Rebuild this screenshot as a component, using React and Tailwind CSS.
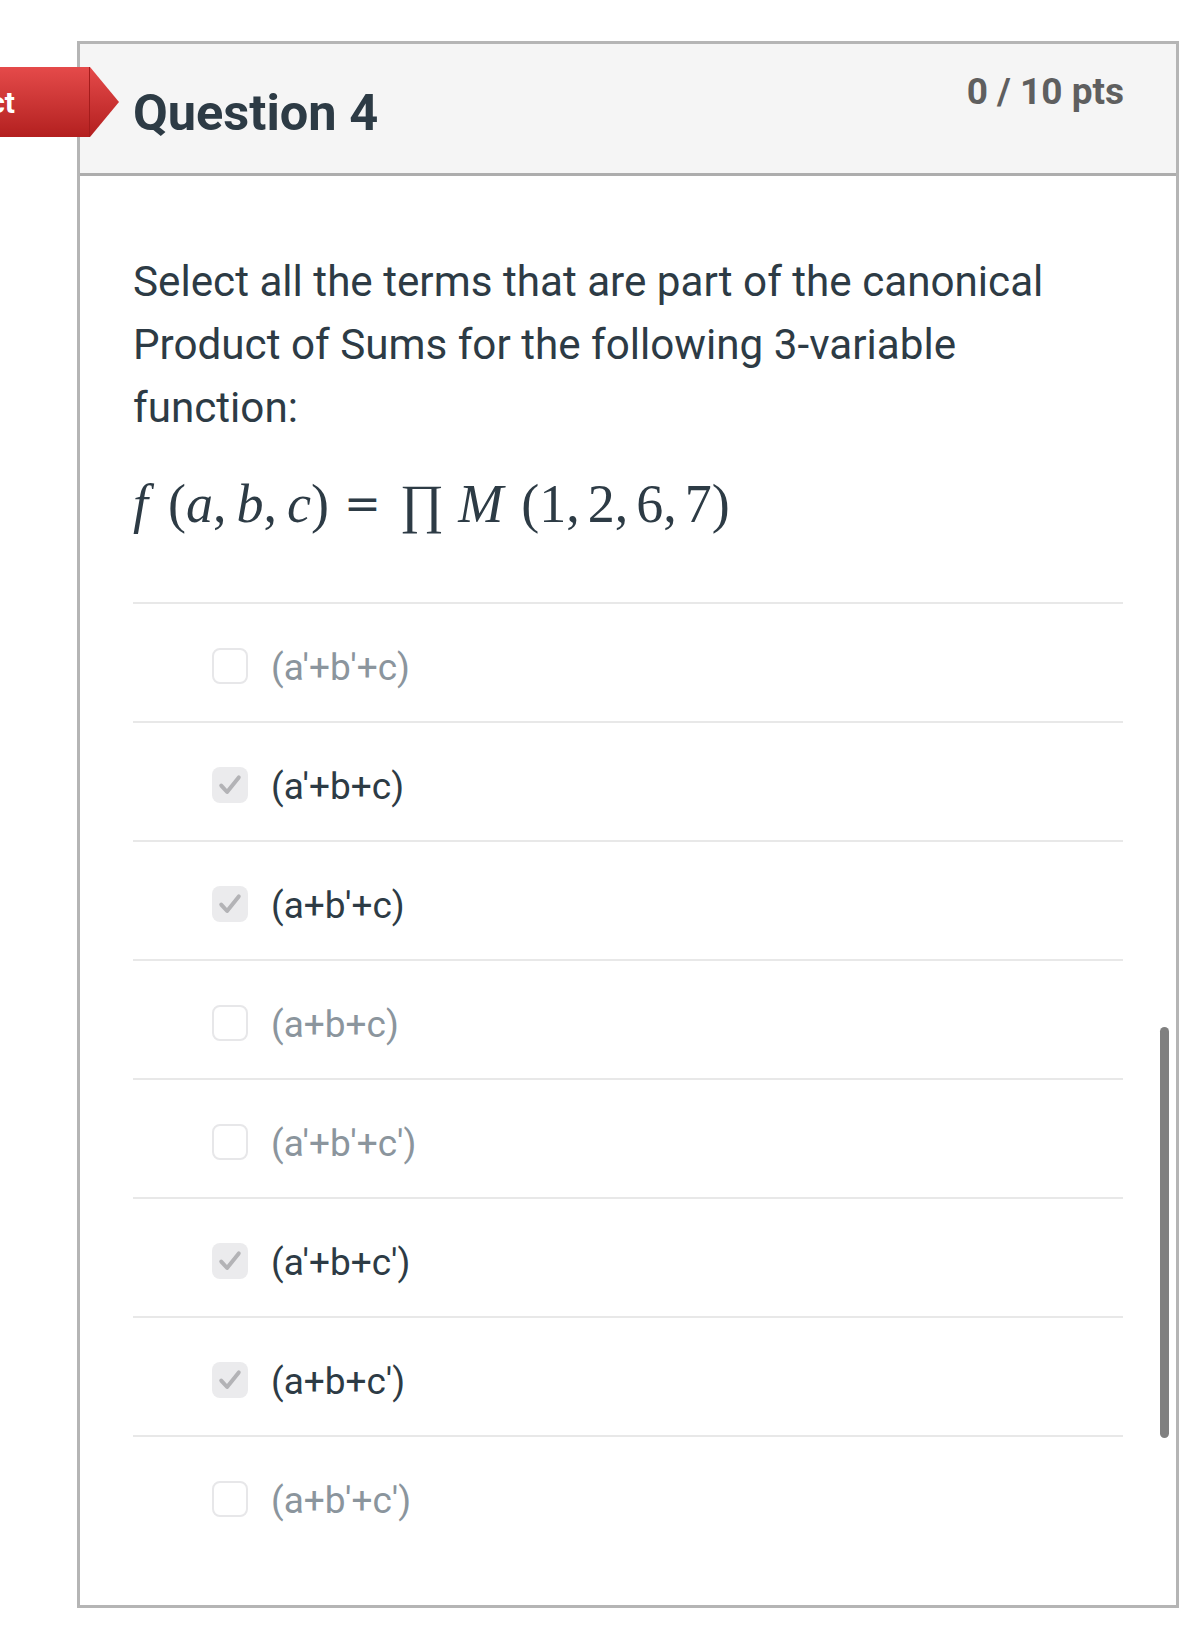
import React from 'react';

const options = [
  { label: "(a'+b'+c)", checked: false },
  { label: "(a'+b+c)", checked: true },
  { label: "(a+b'+c)", checked: true },
  { label: '(a+b+c)', checked: false },
  { label: "(a'+b'+c')", checked: false },
  { label: "(a'+b+c')", checked: true },
  { label: "(a+b+c')", checked: true },
  { label: "(a+b'+c')", checked: false },
];

const CheckBox = ({ checked }) => {
  if (checked) {
    return (
      <span className="flex h-[36px] w-[36px] shrink-0 items-center justify-center rounded-[8px] bg-[#ebebed]">
        <svg viewBox="0 0 24 24" className="h-[28px] w-[28px]" fill="none" stroke="#b3b3b6" strokeWidth="3.4" strokeLinecap="round" strokeLinejoin="round">
          <path d="M4.5 12.5l5 5.5L19.5 5.5" />
        </svg>
      </span>
    );
  }
  return <span className="h-[36px] w-[36px] shrink-0 rounded-[8px] border-2 border-[#e7e7e9] bg-white" />;
};

const Formula = () => (
  <div className="flex items-center whitespace-nowrap text-[54px] leading-none text-[#2d3b45] font-['Liberation_Serif',serif]">
    <span className="italic">f</span>
    <span className="ml-[20px]">(</span>
    <span className="italic">a</span>
    <span>,</span>
    <span className="ml-[10px] italic">b</span>
    <span>,</span>
    <span className="ml-[10px] italic">c</span>
    <span>)</span>
    <span className="ml-[15px] text-[44px] font-['DejaVu_Serif',serif]">=</span>
    <span className="ml-[19px]">∏</span>
    <span className="ml-[14px] italic">M</span>
    <span className="ml-[18px]">(1,</span>
    <span className="ml-[8px]">2,</span>
    <span className="ml-[8px]">6,</span>
    <span className="ml-[8px]">7)</span>
  </div>
);

export default function App() {
  return (
    <div className="relative min-h-[1647px] bg-white pl-[77px] pt-[41px] font-['Roboto','Liberation_Sans',sans-serif]">
      <div className="relative w-[1102px] border-[3px] border-[#b5b5b5]">
        {/* header */}
        <div className="flex h-[132px] items-start justify-between border-b-[3px] border-[#adadad] bg-[#f5f5f5] pl-[53px] pr-[52px]">
          <h2 className="mt-[37px] text-[50.5px] font-bold leading-[64px] text-[#2d3b45]">Question 4</h2>
          <div className="mt-[24px] text-[37px] font-bold leading-[48px] text-[#5f5f5f]">0 / 10 pts</div>
        </div>

        {/* body */}
        <div className="px-[53px] pb-[51px] pt-[74px]">
          <p className="text-[42.2px] leading-[63px] text-[#2d3b45]">
            Select all the terms that are part of the canonical Product of Sums for the following 3-variable function:
          </p>
          <div className="mb-[71px] mt-[38px]">
            <Formula />
          </div>

          <div>
            {options.map((o) => (
              <div key={o.label} className="flex h-[119px] items-center border-t-2 border-[#e8e8e8] pl-[79px] pt-[6px]">
                <CheckBox checked={o.checked} />
                <span className={`ml-[23px] mt-[4px] text-[37px] leading-none ${o.checked ? 'text-[#2d3b45]' : 'text-[#8b959d]'}`}>
                  {o.label}
                </span>
              </div>
            ))}
          </div>
        </div>

        {/* scrollbar */}
        <div className="absolute right-[7px] top-[983px] h-[411px] w-[9px] rounded-full bg-[#808080]" />
      </div>

      {/* incorrect banner */}
      <div className="absolute left-0 top-[67px] flex h-[70px]">
        <div className="flex w-[90px] items-center justify-end overflow-hidden border-r border-[#a51c1c] bg-gradient-to-b from-[#e54a4a] to-[#b31f1f] pr-[74px] text-[30px] font-bold text-white">
          <span className="whitespace-nowrap">Incorrect</span>
        </div>
        <svg width="29" height="70" viewBox="0 0 29 70" className="block">
          <defs>
            <linearGradient id="rg" x1="0" y1="0" x2="0" y2="1">
              <stop offset="0" stopColor="#e54a4a" />
              <stop offset="1" stopColor="#b31f1f" />
            </linearGradient>
          </defs>
          <polygon points="0,0 29,35 0,70" fill="url(#rg)" />
        </svg>
      </div>
    </div>
  );
}
